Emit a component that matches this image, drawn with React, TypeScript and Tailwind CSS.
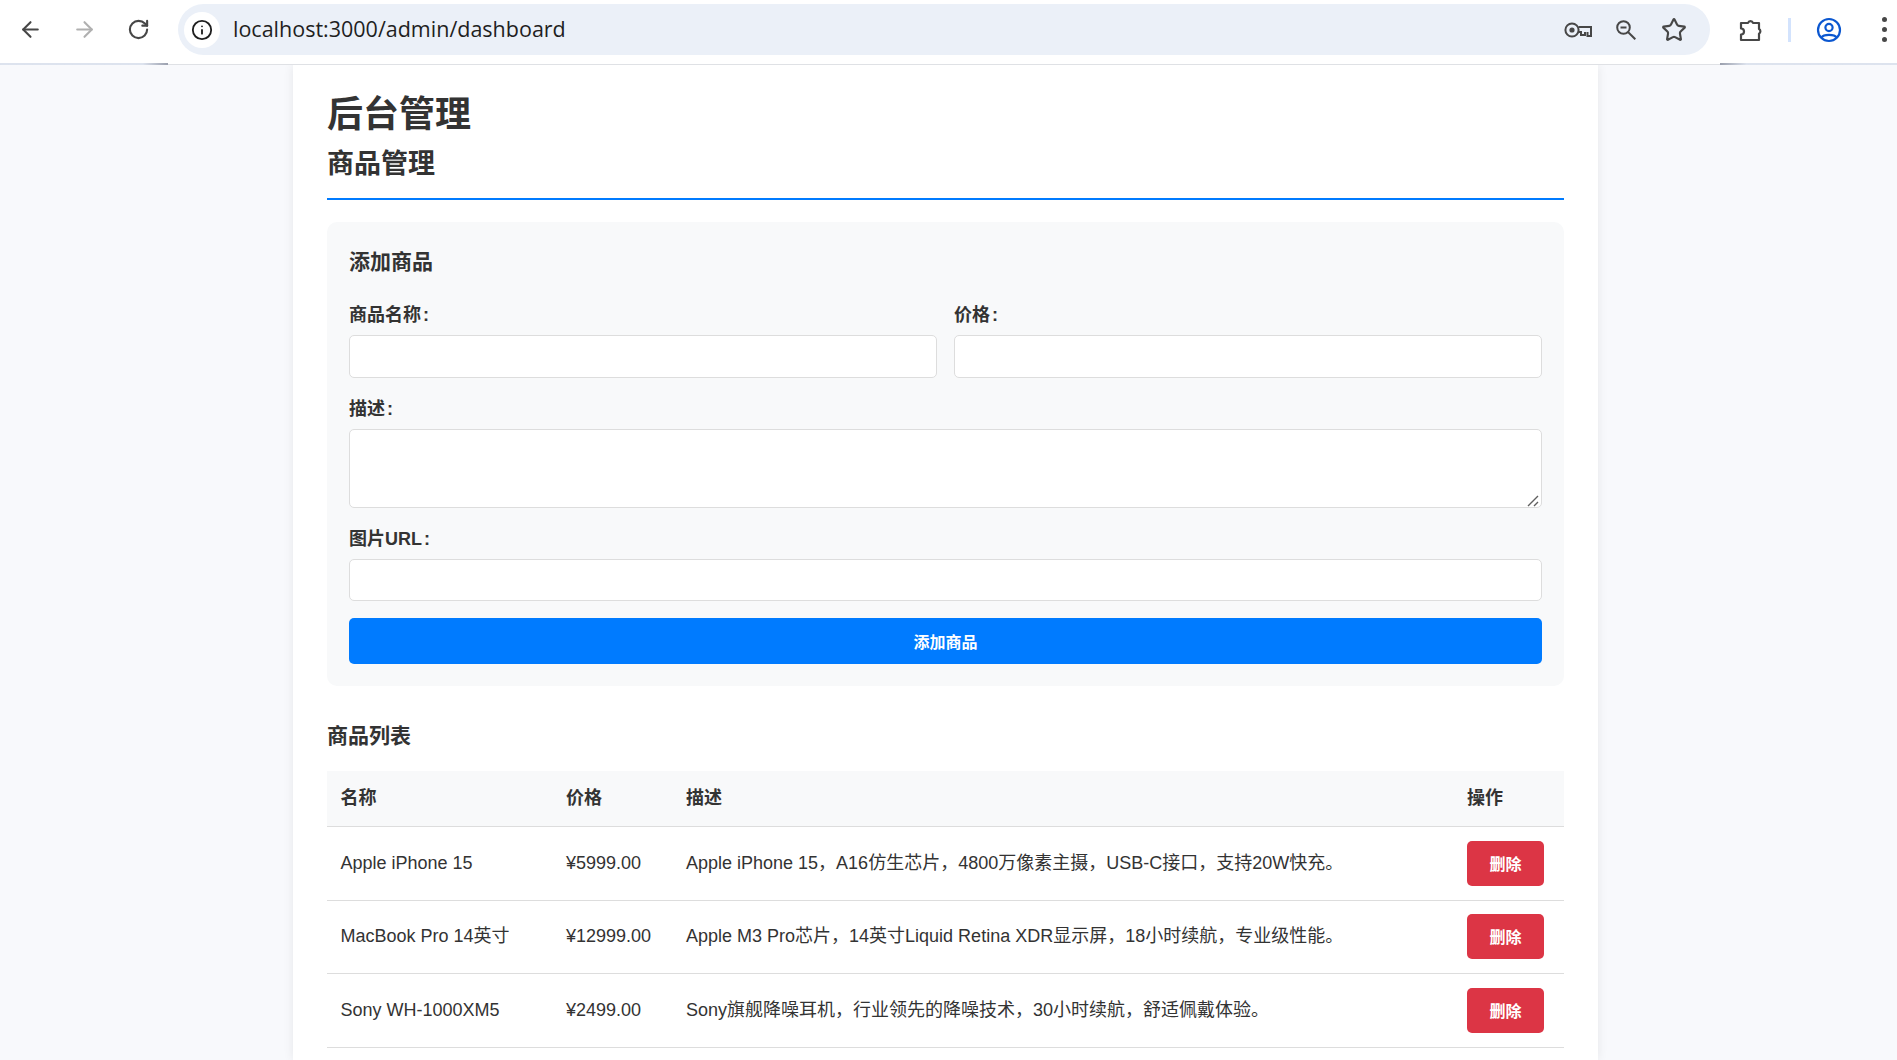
import { ArrowLeft, ArrowRight, Info, RotateCw, Star } from "lucide-react";

const products = [
  {
    name: "Apple iPhone 15",
    price: "¥5999.00",
    desc: "Apple iPhone 15\uFF0CA16仿生芯片\uFF0C4800万像素主摄\uFF0CUSB-C接口\uFF0C支持20W快充。",
  },
  {
    name: "MacBook Pro 14英寸",
    price: "¥12999.00",
    desc: "Apple M3 Pro芯片\uFF0C14英寸Liquid Retina XDR显示屏\uFF0C18小时续航\uFF0C专业级性能。",
  },
  {
    name: "Sony WH-1000XM5",
    price: "¥2499.00",
    desc: "Sony旗舰降噪耳机\uFF0C行业领先的降噪技术\uFF0C30小时续航\uFF0C舒适佩戴体验。",
  },
];

const sans = "font-['Liberation_Sans','Noto_Sans_CJK_SC',sans-serif]";
const fieldClass = "block w-full rounded-[5px] border border-[#dddddd] bg-white";

function FieldLabel({ text }: { text: string }) {
  return (
    <label className="mb-[9px] block text-[18px] leading-[22px] font-bold text-[#333333]">
      {text}
      <span className="ml-[2px]">:</span>
    </label>
  );
}

function KeyIcon() {
  return (
    <svg width="28" height="16" viewBox="0 0 28 16" fill="none" stroke="#474747" strokeWidth="2">
      <circle cx="8" cy="8" r="6.6" />
      <circle cx="8" cy="8" r="2.6" fill="#474747" stroke="none" />
      <path d="M14.5 5h12.5v9h-3.5v-4M21 10v3h-4v-3h-2" />
    </svg>
  );
}

function ZoomOutIcon() {
  return (
    <svg width="20" height="20" viewBox="0 0 20 20" fill="none" stroke="#474747" strokeWidth="2">
      <circle cx="7.5" cy="7.5" r="6.3" />
      <path d="M12 12l7.3 7.3" />
      <path d="M4.5 7.5h6" />
    </svg>
  );
}

function PuzzleIcon() {
  return (
    <svg width="26" height="26" viewBox="0 0 26 26" fill="none" stroke="#474747" strokeWidth="2.2" strokeLinejoin="round">
      <path d="M2 6h7a2.6 2.6 0 0 1 5 0h6v6a2.6 2.6 0 0 1 0 4.6V23H2v-5.5a3 3 0 0 0 0-6z" />
    </svg>
  );
}

function ProfileIcon() {
  return (
    <svg width="26" height="26" viewBox="0 0 26 26" fill="none" stroke="#0b57d0" strokeWidth="2.2">
      <circle cx="13" cy="13" r="11" />
      <circle cx="13" cy="10.5" r="3.6" />
      <path d="M5.5 20.5c2-3.6 13-3.6 15 0" />
    </svg>
  );
}

function Toolbar() {
  return (
    <header className="relative flex h-[65px] shrink-0 items-center border-b border-[#dfe1e5] bg-white pb-[5px]">
      <div className="flex w-[178px] items-center pl-[18px]">
        <ArrowLeft size={25} color="#474747" strokeWidth={2} />
        <ArrowRight size={25} color="#b0b0b0" strokeWidth={2} className="ml-[29px]" />
        <RotateCw size={23} color="#474747" strokeWidth={2.2} className="ml-[30px]" />
      </div>
      <div className="flex h-[51px] w-[1532px] items-center rounded-full bg-[#ebf0f8] pl-[6px] pr-[23px]">
        <div className="flex h-[36px] w-[36px] items-center justify-center rounded-full bg-white">
          <Info size={22} color="#1f1f1f" strokeWidth={2} />
        </div>
        <span className="ml-[13px] font-['Open_Sans',sans-serif] text-[21.5px] text-[#1f1f1f]">
          localhost:3000/admin/dashboard
        </span>
        <div className="ml-auto flex items-center">
          <KeyIcon />
          <div className="ml-[24px]">
            <ZoomOutIcon />
          </div>
          <Star size={26} color="#474747" strokeWidth={2} className="ml-[25px]" />
        </div>
      </div>
      <div className="flex flex-1 items-center pl-[29px]">
        <PuzzleIcon />
        <div className="ml-[23px] h-[24px] w-[3px] bg-[#d3e3fd]" />
        <div className="ml-[25px]">
          <ProfileIcon />
        </div>
        <div className="ml-[40px] flex flex-col gap-[5px]">
          <span className="h-[5px] w-[5px] rounded-full bg-[#474747]" />
          <span className="h-[5px] w-[5px] rounded-full bg-[#474747]" />
          <span className="h-[5px] w-[5px] rounded-full bg-[#474747]" />
        </div>
      </div>
      {/* sliver of the page header showing under the toolbar */}
      <div className="absolute bottom-[-1px] left-0 h-[2px] w-[168px] bg-gradient-to-r from-[#dde3ee] from-85% to-[#9a9fad]" />
      <div className="absolute right-0 bottom-[-1px] h-[2px] w-[177px] bg-gradient-to-r from-[#9a9fad] to-[#dde3ee] to-15%" />
    </header>
  );
}

function AddProductForm() {
  return (
    <div className="mt-[22px] rounded-[10px] bg-[#f8f9fa] px-[22px] pt-[22px] pb-[22px]">
      <h3 className="mb-[24px] text-[21px] leading-[36px] font-bold text-[#333333]">添加商品</h3>
      <div className="grid grid-cols-2 gap-x-[17px]">
        <div>
          <FieldLabel text="商品名称" />
          <input className={`${fieldClass} h-[43px]`} />
        </div>
        <div>
          <FieldLabel text="价格" />
          <input className={`${fieldClass} h-[43px]`} />
        </div>
      </div>
      <div className="mt-[20px]">
        <FieldLabel text="描述" />
        <div className="relative">
          <textarea className={`${fieldClass} h-[79px] resize-none`} />
          <svg className="absolute right-[3px] bottom-[1px]" width="12" height="12" viewBox="0 0 12 12" stroke="#5f5f5f" strokeWidth="1.4">
            <path d="M1 11L11 1M7 11l4-4" />
          </svg>
        </div>
      </div>
      <div className="mt-[20px]">
        <FieldLabel text="图片URL" />
        <input className={`${fieldClass} h-[42px]`} />
      </div>
      <button className="mt-[17px] h-[46px] w-full rounded-[5px] bg-[#007bff] pt-[3px] text-[16px] font-bold text-white">
        添加商品
      </button>
    </div>
  );
}

function ProductTable() {
  return (
    <table className="w-full table-fixed border-collapse">
      <thead>
        <tr className="h-[55px] border-b border-[#dddddd] bg-[#f8f9fa] text-left text-[18px] font-bold text-[#333333]">
          <th className="w-[225.5px] px-[13.5px]">名称</th>
          <th className="w-[120px] px-[13.5px]">价格</th>
          <th className="px-[13.5px]">描述</th>
          <th className="w-[111px] px-[14px]">操作</th>
        </tr>
      </thead>
      <tbody>
        {products.map((p) => (
          <tr key={p.name} className="group border-b border-[#dddddd] text-[18px] text-[#333333]">
            <td className="px-[13.5px]">{p.name}</td>
            <td className="px-[13.5px]">{p.price}</td>
            <td className="px-[13.5px]">{p.desc}</td>
            <td className="px-[14px] py-[14px] group-even:py-[13.5px]">
              <button className="block h-[45px] w-[77px] rounded-[5px] bg-[#dc3545] pt-[3px] text-[16px] font-bold text-white">
                删除
              </button>
            </td>
          </tr>
        ))}
      </tbody>
    </table>
  );
}

export default function App() {
  return (
    <div className={`flex h-screen flex-col overflow-hidden bg-[#f8f9fc] ${sans}`}>
      <Toolbar />
      <main className="ml-[293px] w-[1305px] flex-1 bg-white px-[34px] pt-[30px] shadow-[0_0_10px_rgba(0,0,0,0.08)]">
        <h1 className="text-[36px] leading-[40px] font-bold text-[#333333]">后台管理</h1>
        <h2 className="mt-[13px] border-b-2 border-[#007bff] pb-[18px] text-[27px] leading-[32px] font-bold text-[#333333]">
          商品管理
        </h2>
        <AddProductForm />
        <h3 className="mt-[35px] mb-[20px] text-[21px] leading-[30px] font-bold text-[#333333]">商品列表</h3>
        <ProductTable />
      </main>
    </div>
  );
}
